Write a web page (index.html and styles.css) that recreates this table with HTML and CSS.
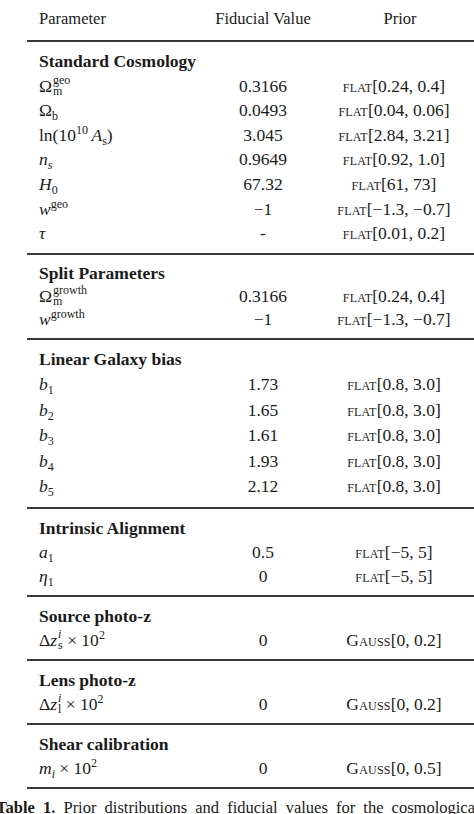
FILE: index.html
```html
<!DOCTYPE html>
<html lang="en">
<head>
<meta charset="utf-8">
<title>Table 1</title>
<link rel="stylesheet" href="styles.css">
</head>
<body>
<div class="page">
  <div class="table">
    <div class="head">
      <div class="c1">Parameter</div>
      <div class="c2">Fiducial Value</div>
      <div class="c3 prior-h">Prior</div>
    </div>

    <div class="sec std">
      <div class="title">Standard Cosmology</div>
      <div class="row"><div class="c1">Ω<span class="ss"><span>geo</span><span>m</span></span></div><div class="c2">0.3166</div><div class="c3"><span class="sc">flat</span>[0.24, 0.4]</div></div>
      <div class="row"><div class="c1">Ω<span class="sub">b</span></div><div class="c2">0.0493</div><div class="c3"><span class="sc">flat</span>[0.04, 0.06]</div></div>
      <div class="row"><div class="c1">ln(10<span class="sup">10</span>&thinsp;<i>A</i><span class="sub">s</span>)</div><div class="c2">3.045</div><div class="c3"><span class="sc">flat</span>[2.84, 3.21]</div></div>
      <div class="row"><div class="c1"><i>n</i><span class="sub"><i>s</i></span></div><div class="c2">0.9649</div><div class="c3"><span class="sc">flat</span>[0.92, 1.0]</div></div>
      <div class="row"><div class="c1"><i>H</i><span class="sub">0</span></div><div class="c2">67.32</div><div class="c3"><span class="sc">flat</span>[61, 73]</div></div>
      <div class="row"><div class="c1"><i>w</i><span class="sup">geo</span></div><div class="c2">−1</div><div class="c3"><span class="sc">flat</span>[−1.3, −0.7]</div></div>
      <div class="row"><div class="c1"><i>τ</i></div><div class="c2">-</div><div class="c3"><span class="sc">flat</span>[0.01, 0.2]</div></div>
    </div>

    <div class="sec split">
      <div class="title">Split Parameters</div>
      <div class="row"><div class="c1">Ω<span class="ss"><span>growth</span><span>m</span></span></div><div class="c2">0.3166</div><div class="c3"><span class="sc">flat</span>[0.24, 0.4]</div></div>
      <div class="row"><div class="c1"><i>w</i><span class="sup">growth</span></div><div class="c2">−1</div><div class="c3"><span class="sc">flat</span>[−1.3, −0.7]</div></div>
    </div>

    <div class="sec bias">
      <div class="title">Linear Galaxy bias</div>
      <div class="row"><div class="c1"><i>b</i><span class="sub">1</span></div><div class="c2">1.73</div><div class="c3"><span class="sc">flat</span>[0.8, 3.0]</div></div>
      <div class="row"><div class="c1"><i>b</i><span class="sub">2</span></div><div class="c2">1.65</div><div class="c3"><span class="sc">flat</span>[0.8, 3.0]</div></div>
      <div class="row"><div class="c1"><i>b</i><span class="sub">3</span></div><div class="c2">1.61</div><div class="c3"><span class="sc">flat</span>[0.8, 3.0]</div></div>
      <div class="row"><div class="c1"><i>b</i><span class="sub">4</span></div><div class="c2">1.93</div><div class="c3"><span class="sc">flat</span>[0.8, 3.0]</div></div>
      <div class="row"><div class="c1"><i>b</i><span class="sub">5</span></div><div class="c2">2.12</div><div class="c3"><span class="sc">flat</span>[0.8, 3.0]</div></div>
    </div>

    <div class="sec">
      <div class="title">Intrinsic Alignment</div>
      <div class="row"><div class="c1"><i>a</i><span class="sub">1</span></div><div class="c2">0.5</div><div class="c3"><span class="sc">flat</span>[−5, 5]</div></div>
      <div class="row"><div class="c1"><i>η</i><span class="sub">1</span></div><div class="c2">0</div><div class="c3"><span class="sc">flat</span>[−5, 5]</div></div>
    </div>

    <div class="sec">
      <div class="title">Source photo-z</div>
      <div class="row"><div class="c1">Δ<i>z</i><span class="ss"><span><i>i</i></span><span>s</span></span> × 10<span class="sup">2</span></div><div class="c2">0</div><div class="c3"><span class="sc">Gauss</span>[0, 0.2]</div></div>
    </div>

    <div class="sec">
      <div class="title">Lens photo-z</div>
      <div class="row"><div class="c1">Δ<i>z</i><span class="ss"><span><i>i</i></span><span>l</span></span> × 10<span class="sup">2</span></div><div class="c2">0</div><div class="c3"><span class="sc">Gauss</span>[0, 0.2]</div></div>
    </div>

    <div class="sec">
      <div class="title">Shear calibration</div>
      <div class="row"><div class="c1"><i>m</i><span class="sub"><i>i</i></span> × 10<span class="sup">2</span></div><div class="c2">0</div><div class="c3"><span class="sc">Gauss</span>[0, 0.5]</div></div>
    </div>
  </div>

  <p class="caption"><b>Table 1.</b> Prior distributions and fiducial values for the cosmological parameters used in this work.</p>
</div>
</body>
</html>
```

FILE: styles.css
```css
html, body {
  margin: 0;
  padding: 0;
  background: #ffffff;
  overflow: hidden;
}

.page {
  width: 474px;
  height: 814px;
  overflow: hidden;
  font-family: "Liberation Serif", "Times New Roman", serif;
  color: #1a1a1a;
}

.table {
  margin-left: 27px;
  width: 447px;
}

.head,
.row {
  display: grid;
  grid-template-columns: 176px 120px 142px;
  align-items: center;
}

.head {
  font-size: 16.5px;
  line-height: 22px;
  padding: 8px 0 10px;
  border-bottom: 2px solid #3a3a3a;
}

.c1 {
  padding-left: 12px;
  white-space: nowrap;
}

.c2,
.c3 {
  text-align: center;
  white-space: nowrap;
}

.prior-h {
  padding-left: 12px;
}

.sec {
  font-size: 17.5px;
  padding: 7px 0;
  border-bottom: 2px solid #3a3a3a;
  --rh: 24px;
}

.sec.std { --rh: 24.6px; }
.sec.split { --rh: 23px; }
.sec.bias { --rh: 25.5px; }

.title,
.row {
  height: var(--rh);
  line-height: var(--rh);
}

.title {
  font-weight: bold;
  padding-left: 12px;
  white-space: nowrap;
}

.sc {
  font-variant: small-caps;
  letter-spacing: 0.2px;
}

.sub {
  font-size: 12px;
  line-height: 0;
  vertical-align: -3.5px;
}

.sup {
  font-size: 12px;
  line-height: 0;
  vertical-align: 7px;
}

.ss {
  display: inline-block;
  font-size: 12px;
  line-height: 11px;
  vertical-align: -3.5px;
  margin-left: 1px;
}

.ss > span {
  display: block;
}

.caption {
  margin: 9px 0 0 -4px;
  font-size: 16.5px;
  line-height: 20px;
  word-spacing: 4px;
  white-space: nowrap;
}
```
